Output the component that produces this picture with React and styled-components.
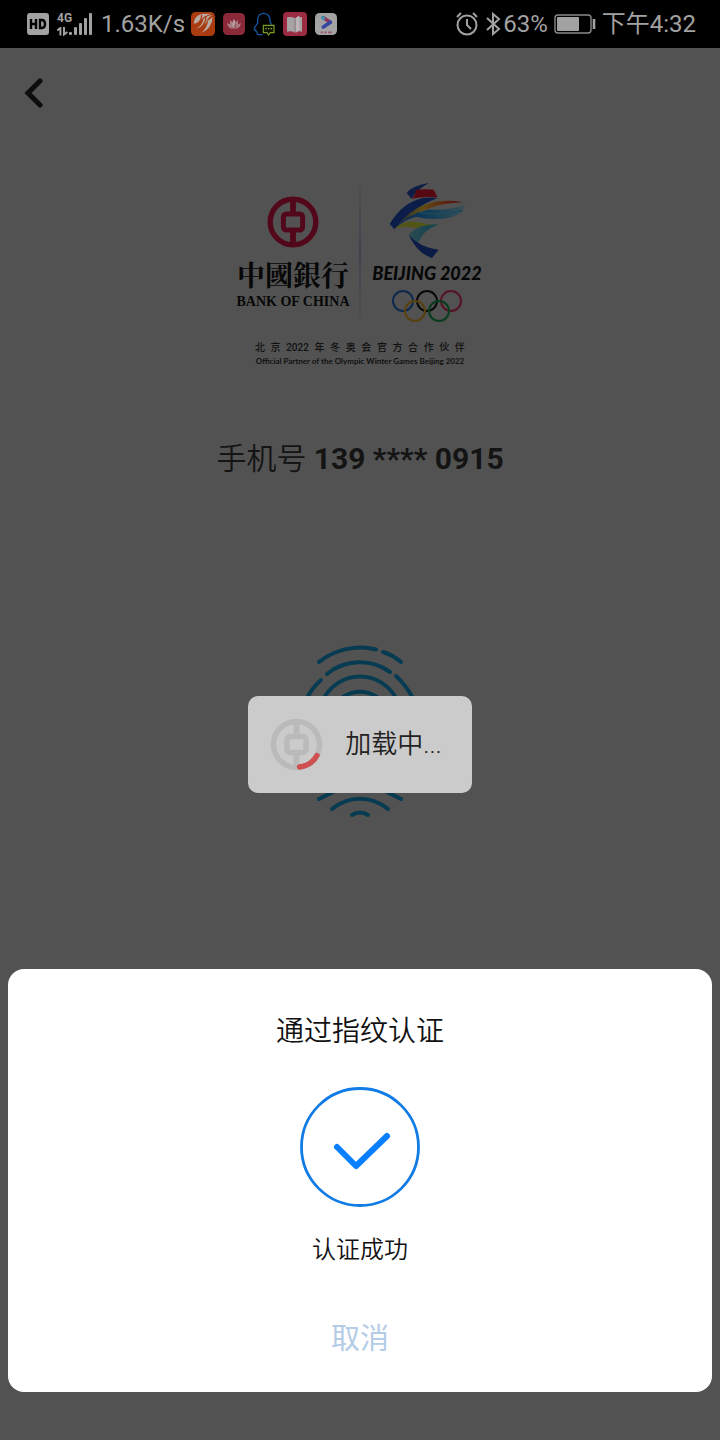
import React from "react";
import styled, { createGlobalStyle } from "styled-components";

const GlobalStyle = createGlobalStyle`
  *, *::before, *::after { box-sizing: border-box; }
  body {
    margin: 0;
    background: #525252;
    font-family: Roboto, "Noto Sans CJK SC", sans-serif;
  }
  button { font: inherit; border: 0; background: none; padding: 0; cursor: pointer; }
  h1, h2, p { margin: 0; font-weight: 400; }
  svg { display: block; flex: none; }
`;

const Screen = styled.div`
  position: relative;
  min-height: 100vh;
  display: flex;
  flex-direction: column;
  background: #525252;
`;

const StatusBar = styled.header`
  display: flex;
  align-items: center;
  justify-content: space-between;
  height: 48px;
  padding: 0 24px 0 27px;
  background: #000;
  color: #a2a2a2;
  font-size: 24px;
  line-height: 32px;
  white-space: nowrap;
`;

const StatusGroup = styled.div`
  display: flex;
  align-items: center;
  gap: ${(p) => p.$gap}px;
`;

const Content = styled.main`
  position: relative;
  flex: 1;
  display: flex;
  flex-direction: column;
  align-items: center;
`;

const NavBar = styled.nav`
  align-self: stretch;
  display: flex;
  padding: 30px 24px 0;
`;

const BackButton = styled.button`
  width: 20px;
  height: 30px;
`;

const BrandRow = styled.section`
  display: grid;
  grid-template-columns: 1fr 2px 1fr;
  gap: 8px;
  margin-top: 75px;
  color: #070707;
`;

const Divider = styled.div`
  height: 136px;
  background: linear-gradient(#4e4e54, #42424f 50%, #4e4e54);
`;

const Brand = styled.div`
  display: flex;
  flex-direction: column;
  align-items: center;
  width: 116px;
  padding-top: ${(p) => p.$top}px;
  white-space: nowrap;
`;

const BankNameChinese = styled.span`
  margin-top: 8px;
  font-family: "Noto Serif CJK SC", "Noto Sans CJK TC", serif;
  font-size: 28px;
  line-height: 36px;
  font-weight: 700;
`;

const BankNameEnglish = styled.span`
  font-family: "Liberation Serif", serif;
  font-size: 14px;
  line-height: 20px;
  font-weight: 700;
`;

const GamesName = styled.span`
  margin: 2px 0 4px;
  font-family: Lato, sans-serif;
  font-size: 18px;
  line-height: 24px;
  font-weight: 900;
  font-style: italic;
`;

const Partner = styled.div`
  width: 210px;
  margin-top: 18px;
  color: #111;
  font-size: 10px;
  line-height: 14px;
  font-weight: 700;
`;

const SpacedLine = styled.p`
  display: flex;
  justify-content: space-between;
  font-weight: 500;
`;

const PartnerEnglish = styled.p`
  font-family: Lato, sans-serif;
  font-size: 8px;
  line-height: 12px;
  font-weight: 700;
  text-align: center;
  white-space: nowrap;
`;

const Phone = styled.h1`
  margin-top: 72px;
  color: #141414;
  font-size: 30px;
  line-height: 40px;
  font-weight: 350;
  strong { font-weight: 700; }
`;

const Fingerprint = styled.svg`
  margin-top: 161px;
`;

const ToastLayer = styled.div`
  position: absolute;
  inset: 0;
  display: flex;
  align-items: center;
  justify-content: center;
`;

const Toast = styled.div`
  display: flex;
  align-items: center;
  gap: 22px;
  padding: 22px 30px 22px 22px;
  border-radius: 10px;
  background: #cbcbcb;
  color: #222;
  font-size: 26px;
  line-height: 53px;
  font-weight: 350;
`;

const Sheet = styled.section`
  position: absolute;
  left: 8px;
  right: 8px;
  bottom: 48px;
  display: flex;
  flex-direction: column;
  align-items: center;
  padding: 43px 24px 33px;
  border-radius: 16px;
  background: #fff;
  color: #111;
`;

const SheetTitle = styled.h2`
  font-size: 28px;
  line-height: 40px;
  font-weight: 350;
`;

const SuccessMark = styled.svg`
  margin: 35px 0 27px;
`;

const SheetMessage = styled.p`
  font-size: 24px;
  line-height: 32px;
  font-weight: 350;
`;

const CancelButton = styled.button`
  && {
    margin-top: 53px;
    padding: 0 24px;
    color: #b4cce6;
    font-size: 29px;
    line-height: 40px;
  }
`;

const HdIcon = () => (
  <svg width="22" height="22" viewBox="0 0 22 22" aria-hidden="true">
    <rect width="22" height="22" rx="3" fill="#a2a2a2" />
    <path d="M4 6v10M9 6v10M4 11h5M13 7v8h2q3 0 3-4t-3-4z" fill="none" stroke="#000" strokeWidth="2.4" />
  </svg>
);

const NetworkLabel = styled.span`
  font-size: 12px;
  line-height: 12px;
  font-weight: 700;
`;

const Network = styled.div`
  display: grid;
  grid-template-columns: 12px 24px;
  align-items: end;
  height: 24px;
`;

const NetworkSide = styled.div`
  display: flex;
  flex-direction: column;
  gap: 3px;
`;

const SignalIcon = () => (
  <Network>
    <NetworkSide>
      <NetworkLabel>4G</NetworkLabel>
      <svg width="12" height="9" viewBox="0 0 12 9" aria-hidden="true">
        <path d="M0 3.5L3.4 1v7.5M7 0v7.5L10.4 5" fill="none" stroke="#a2a2a2" strokeWidth="2" />
      </svg>
    </NetworkSide>
    <svg width="24" height="24" viewBox="0 0 24 24" fill="#a2a2a2" aria-hidden="true">
      <rect x="0" y="20" width="3" height="3" rx="1" />
      <rect x="5" y="15" width="3" height="8" rx="1" />
      <rect x="10" y="11" width="3" height="12" rx="1" />
      <rect x="15" y="6" width="3" height="17" rx="1" />
      <rect x="20" y="1" width="3" height="22" rx="1" />
    </svg>
  </Network>
);

const NewsIcon = () => (
  <svg width="24" height="24" viewBox="0 0 72 72" aria-hidden="true">
    <rect width="72" height="72" rx="14" fill="#aa3b10" />
    <path d="M8 35Q10 10 34 6L64 5Q43 9 33 20Q28 32 8 35z" fill="#b9aaa3" />
    <path d="M15 50Q35 40 37 22Q45 11 65 9Q51 16 49 25Q43 43 15 50zM31 63Q50 44 51 26L65 14Q64 48 31 63z" fill="#b9aaa3" />
    <path d="M32 9Q32 26 17 37M45 12Q46 36 23 52" fill="none" stroke="#aa3b10" strokeWidth="4" />
  </svg>
);

const LotusIcon = () => (
  <svg width="22" height="22" viewBox="0 0 66 66" aria-hidden="true">
    <rect width="66" height="66" rx="14" fill="#8c2938" />
    <g fill="#b49a9e">
      <path d="M33 17q-11 16 0 31q11-15 0-31zM22 22q-5 17 10 26q0-18-10-26zM44 22q5 17-10 26q0-18 10-26zM12 31q5 17 20 17q-7-14-20-17zM54 31q-5 17-20 17q7-14 20-17z" />
    </g>
    <path d="M32 48Q22 38 23 26M34 48Q44 38 43 26M32 48Q21 42 16 34M34 48Q45 42 50 34" fill="none" stroke="#8c2938" strokeWidth="1.5" />
  </svg>
);

const MessengerIcon = () => (
  <svg width="22" height="24" viewBox="0 0 66 72" fill="none" aria-hidden="true">
    <path d="M14 61Q6 58 9 53Q3 57 4 48L14 33Q11 4 33 4Q52 5 51 30L57 39M14 61Q9 68 19 68H29" stroke="#15549d" strokeWidth="4" />
    <path d="M31 40h32v22H52l-5 7-5-7H31z" fill="#0c1200" stroke="#7d9c28" strokeWidth="3.5" />
    <path d="M37 50h4m4 0h4m4 0h4" stroke="#91a94a" strokeWidth="4" />
  </svg>
);

const ReaderIcon = () => (
  <svg width="24" height="24" viewBox="0 0 72 72" aria-hidden="true">
    <rect width="72" height="72" rx="12" fill="#9b2b40" />
    <path d="M12 16q15-3 24 3q9-6 21-3v43q-14-3-21 3q-11-6-24-3z" fill="#a7a3a4" />
    <path d="M39 18l10-8v44l-10 8z" fill="#bbb5b7" />
    <path d="M36 19v42" stroke="#7c6569" strokeWidth="2" />
  </svg>
);

const VideoIcon = () => (
  <svg width="22" height="22" viewBox="0 0 66 66" aria-hidden="true">
    <rect width="66" height="66" rx="14" fill="#a3a3a3" />
    <path d="M25 14L46 28" stroke="#91365c" strokeWidth="11" strokeLinecap="round" />
    <path d="M46 28L25 42" stroke="#3447a2" strokeWidth="11" strokeLinecap="round" />
    <path d="M23 14l3 2" stroke="#3a8fb0" strokeWidth="10" strokeLinecap="round" />
    <path d="M17 58h7M28 58h7M39 58h11" stroke="#9b5969" strokeWidth="5" />
  </svg>
);

const AlarmIcon = () => (
  <svg width="24" height="24" viewBox="0 0 24 24" fill="none" stroke="#a2a2a2" strokeWidth="2" aria-hidden="true">
    <circle cx="12" cy="13" r="9.5" />
    <path d="M12 7v6l4 4M2 5l4-4M22 5l-4-4" />
  </svg>
);

const BluetoothIcon = () => (
  <svg width="16" height="24" viewBox="0 0 16 24" fill="none" stroke="#a2a2a2" strokeWidth="2" aria-hidden="true">
    <path d="M2 6l12 11-6 5V2l6 5L2 18" />
  </svg>
);

const BatteryIcon = () => (
  <svg width="42" height="20" viewBox="0 0 42 20" fill="none" aria-hidden="true">
    <rect x="1" y="1" width="36" height="18" rx="3" stroke="#8a8a8a" strokeWidth="1.4" />
    <rect x="3" y="3" width="22" height="14" rx="1" fill="#a2a2a2" />
    <path d="M40 5v10" stroke="#a2a2a2" strokeWidth="2.6" />
  </svg>
);

const BankMark = ({ size, color }) => (
  <svg width={size} height={size} viewBox="0 0 52 52" fill="none" stroke={color} aria-hidden="true">
    <circle cx="26" cy="26" r="22.8" strokeWidth="5.4" />
    <path d="M26 4v14M26 34v14" strokeWidth="5.8" />
    <rect x="16.4" y="18" width="19.2" height="16" rx="3" strokeWidth="5" />
  </svg>
);

const LoadingMark = () => (
  <svg width="53" height="53" viewBox="0 0 53 53" fill="none" stroke="#bababa" aria-hidden="true">
    <circle cx="26.5" cy="26.5" r="23" strokeWidth="5.4" />
    <path d="M26.5 4v13M26.5 36v13" strokeWidth="5.8" />
    <rect x="17" y="18.5" width="19" height="16" rx="3" strokeWidth="5.4" />
    <path d="M29.5 49A23 23 0 0 0 47 37.5" stroke="#cf5050" strokeWidth="5.4" strokeLinecap="round" />
  </svg>
);

const GamesEmblem = () => (
  <svg width="80" height="76" viewBox="82 40 240 228" aria-hidden="true">
    <defs>
      <linearGradient id="warm" x1="0" x2="1">
        <stop offset="0" stopColor="#0b2346" />
        <stop offset="0.4" stopColor="#5f4d13" />
        <stop offset="0.7" stopColor="#602a0d" />
        <stop offset="1" stopColor="#500b13" />
      </linearGradient>
      <linearGradient id="cool" x1="0" x2="1">
        <stop offset="0" stopColor="#0b2450" />
        <stop offset="0.5" stopColor="#103d58" />
        <stop offset="1" stopColor="#3b5053" />
      </linearGradient>
      <linearGradient id="leg" x1="0" x2="1">
        <stop offset="0" stopColor="#2d4b51" />
        <stop offset="1" stopColor="#0b4151" />
      </linearGradient>
    </defs>
    <path d="M208 40Q158 48 141 70L155 87Q174 57 208 40z" fill="#0c1d46" />
    <path d="M168 61Q195 57 222 60L234 83Q190 80 157 87Q169 74 168 61z" fill="#560912" />
    <path d="M90 163Q128 99 188 86Q214 82 234 85Q162 111 104 179z" fill="#0b1d48" />
    <path d="M104 177Q145 123 200 103Q254 87 309 98Q244 100 204 118Q144 139 104 177z" fill="url(#warm)" />
    <path d="M106 176Q143 134 206 120Q276 122 315 106Q310 144 240 148Q202 150 169 141Q132 151 106 176z" fill="url(#cool)" />
    <path d="M174 128Q245 138 309 124" fill="none" stroke="#1d4a5e" strokeWidth="4" />
    <path d="M104 178Q140 145 188 160Q211 167 236 164Q190 180 150 172Q124 170 104 178z" fill="#535517" />
    <path d="M236 164Q176 163 147 195L165 217L178 216Q188 184 236 164z" fill="url(#leg)" />
    <path d="M147 195Q177 232 237 240L217 265Q174 252 147 195z" fill="#0b1b45" />
  </svg>
);

const OlympicRings = () => (
  <svg width="72" height="34" viewBox="0 0 72 34" fill="none" strokeWidth="2" aria-hidden="true">
    <circle cx="12" cy="12" r="10" stroke="#0d2a4e" />
    <circle cx="36" cy="12" r="10" stroke="#090909" />
    <circle cx="60" cy="12" r="10" stroke="#571326" />
    <circle cx="24" cy="22" r="10" stroke="#58400f" />
    <circle cx="48" cy="22" r="10" stroke="#073d1d" />
  </svg>
);

const partnerWords = ["北", "京", "2022", "年", "冬", "奥", "会", "官", "方", "合", "作", "伙", "伴"];

export default function App() {
  return (
    <Screen>
      <GlobalStyle />
      <StatusBar>
        <StatusGroup $gap={6}>
          <StatusGroup $gap={8}>
            <HdIcon />
            <SignalIcon />
            <span>1.63K/s</span>
          </StatusGroup>
          <StatusGroup $gap={8}>
            <NewsIcon />
            <LotusIcon />
            <MessengerIcon />
            <ReaderIcon />
            <VideoIcon />
          </StatusGroup>
        </StatusGroup>
        <StatusGroup $gap={6}>
          <AlarmIcon />
          <StatusGroup $gap={2}>
            <BluetoothIcon />
            <span>63%</span>
          </StatusGroup>
          <BatteryIcon />
          <span>下午4:32</span>
        </StatusGroup>
      </StatusBar>

      <Content>
        <NavBar>
          <BackButton aria-label="返回">
            <svg width="20" height="30" viewBox="0 0 20 30" fill="none" aria-hidden="true">
              <path d="M16 3L4 15l12 12" stroke="#0d0d0d" strokeWidth="5" strokeLinecap="round" />
            </svg>
          </BackButton>
        </NavBar>

        <BrandRow>
          <Brand $top={13}>
            <BankMark size={52} color="#53071b" />
            <BankNameChinese>中國銀行</BankNameChinese>
            <BankNameEnglish>BANK OF CHINA</BankNameEnglish>
          </Brand>
          <Divider />
          <Brand $top={0}>
            <GamesEmblem />
            <GamesName>BEIJING 2022</GamesName>
            <OlympicRings />
          </Brand>
        </BrandRow>

        <Partner>
          <SpacedLine>
            {partnerWords.map((word) => (
              <span key={word}>{word}</span>
            ))}
          </SpacedLine>
          <PartnerEnglish>Official Partner of the Olympic Winter Games Beijing 2022</PartnerEnglish>
        </Partner>

        <Phone>
          手机号 <strong>139 **** 0915</strong>
        </Phone>

        <Fingerprint width="140" height="190" viewBox="0 0 140 190" fill="none" stroke="#073b52" strokeWidth="4" strokeLinecap="round" aria-hidden="true">
          <path d="M29 22A66 66 0 0 1 86 9.5M93 12Q103 15 111 22" />
          <path d="M37 34A52 52 0 0 1 100 32" />
          <path d="M17 58Q22 48 31 40M106 36Q115 44 123 58" />
          <path d="M34 58A41 41 0 0 1 106 58" />
          <path d="M53 57A30 30 0 0 1 87 57" />
          <path d="M29 159L45 151M95 151L111 159" />
          <path d="M42 169A43 43 0 0 1 98 169" />
          <path d="M62 175A15 15 0 0 1 78 175" />
        </Fingerprint>

        <ToastLayer>
          <Toast role="status">
            <LoadingMark />
            <span>加载中...</span>
          </Toast>
        </ToastLayer>
      </Content>

      <Sheet role="dialog" aria-labelledby="sheet-title">
        <SheetTitle id="sheet-title">通过指纹认证</SheetTitle>
        <SuccessMark width="120" height="120" viewBox="0 0 120 120" fill="none" aria-hidden="true">
          <circle cx="60" cy="60" r="58.5" stroke="#117be6" strokeWidth="2.8" />
          <path d="M37 60L56 79L87 49" stroke="#087fff" strokeWidth="6" strokeLinecap="round" strokeLinejoin="round" />
        </SuccessMark>
        <SheetMessage>认证成功</SheetMessage>
        <CancelButton>取消</CancelButton>
      </Sheet>
    </Screen>
  );
}
